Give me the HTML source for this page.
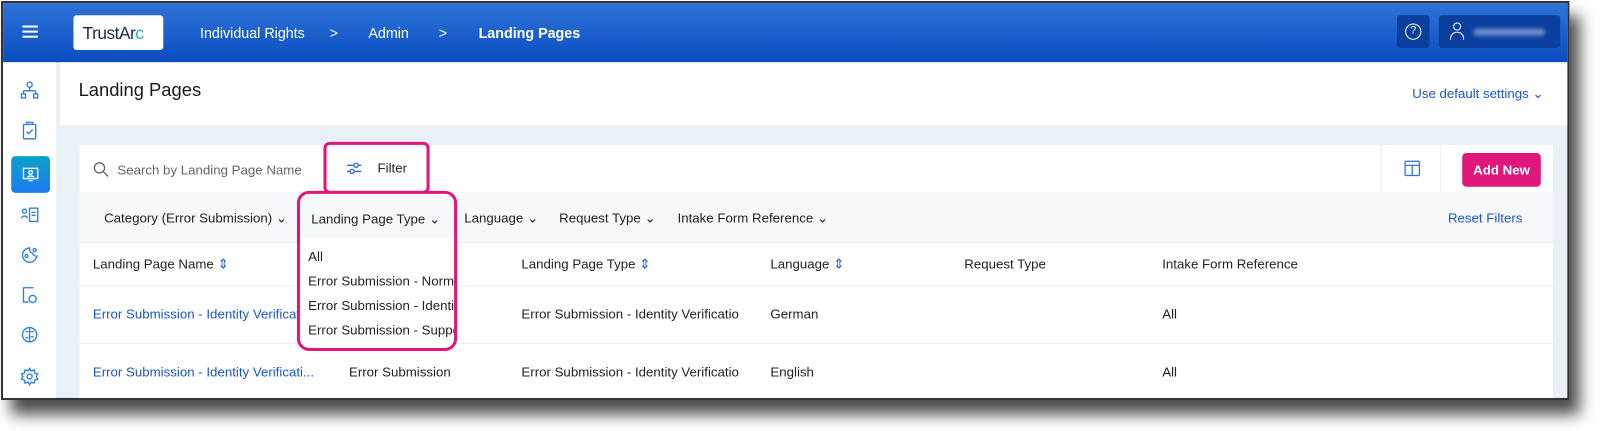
<!DOCTYPE html>
<html><head><meta charset="utf-8"><style>
*{box-sizing:border-box;margin:0;padding:0}
body{width:1600px;height:430px;background:#fff;font-family:"Liberation Sans",sans-serif;position:relative;overflow:hidden}
.wrap{position:absolute;left:0;top:0;width:1568px;height:422px;transform:scale(1.0204);transform-origin:0 0}
.frame{position:absolute;left:1px;top:1px;width:1537px;height:391px;border:2px solid #333;overflow:hidden;background:#e9f0f8;box-shadow:10px 14px 14px rgba(0,0,0,.7)}
.hdr{position:absolute;left:0;top:0;right:0;height:58px;background:linear-gradient(#2f73d8,#0a4ec2)}
.ab{position:absolute;color:#fff;font-size:14px;top:21px}
.side{position:absolute;left:0;top:58px;width:52px;bottom:0;background:#fff}
.title{position:absolute;left:56px;top:58px;right:0;height:62px;background:#fff}
.card{position:absolute;left:75px;top:139px;width:1444px;bottom:0;background:#fff}
.t{position:absolute;font-size:13px;color:#222;white-space:nowrap}
.lnk{color:#1a56c8}
.row{position:absolute;left:0;right:0;border-top:1px solid #eceef1}
.mag{position:absolute;border:3px solid #e0167a;background:#fff}
.ic{position:absolute;left:16px;width:20px;height:20px}
</style></head><body>
<div class="wrap">
<div class="frame">
<div class="hdr">
 <div style="position:absolute;left:19px;top:22px;width:15px;height:2px;background:#fff;box-shadow:0 5px #fff,0 10px #fff"></div>
 <div style="position:absolute;left:69px;top:12px;width:88px;height:34px;background:#fff;border-radius:3px;font-size:17px;color:#1b2a4a;padding:8px 0 0 9px;letter-spacing:-.5px">TrustAr<span style="color:#27b3c9">c</span></div>
 <div class="ab" style="left:193px">Individual Rights</div>
 <div class="ab" style="left:320px">&gt;</div>
 <div class="ab" style="left:358px">Admin</div>
 <div class="ab" style="left:427px">&gt;</div>
 <div class="ab" style="left:466px;font-weight:bold">Landing Pages</div>
 <div style="position:absolute;left:1366px;top:12px;width:32px;height:32px;background:#0a3f9e;border-radius:3px"><div style="margin:8px;width:16px;height:16px;border:1.5px solid #fff;border-radius:50%;color:#fff;font-size:11px;text-align:center;line-height:13px">?</div></div>
 <div style="position:absolute;left:1407px;top:12px;width:119px;height:32px;background:#0a3f9e;border-radius:3px"><div style="position:absolute;left:14px;top:7px;width:8px;height:8px;border:1.5px solid #fff;border-radius:50%"></div><div style="position:absolute;left:11px;top:16px;width:14px;height:8px;border:1.5px solid #fff;border-bottom:none;border-radius:7px 7px 0 0"></div><div style="position:absolute;left:34px;top:13px;width:70px;height:7px;background:#6f8fd0;border-radius:4px;filter:blur(2px)"></div></div>
</div>
<div class="side">
 <svg class="ic" style="top:18px" viewBox="0 0 20 20" fill="none" stroke="#2a7de1" stroke-width="1.3"><circle cx="10" cy="4" r="2.5"/><path d="M10 6.5V10M4 10h12M4 10v3M16 10v3"/><rect x="2" y="13" width="4" height="4"/><rect x="14" y="13" width="4" height="4"/></svg>
 <svg class="ic" style="top:57px" viewBox="0 0 20 20" fill="none" stroke="#2a7de1" stroke-width="1.3"><rect x="4" y="4" width="12" height="14" rx="1"/><path d="M7 4V2h6v2M7 11l2 2 4-4"/></svg>
 <div style="position:absolute;left:8px;top:92px;width:38px;height:36px;border-radius:4px;background:linear-gradient(#0ba1c9,#1d7cf2)"></div>
 <svg class="ic" style="top:100px;left:17px" viewBox="0 0 20 20" fill="none" stroke="#fff" stroke-width="1.3"><rect x="3" y="4" width="14" height="10"/><circle cx="10" cy="8" r="1.8"/><path d="M7 13c0-2 6-2 6 0M8 16h4"/></svg>
 <svg class="ic" style="top:140px" viewBox="0 0 20 20" fill="none" stroke="#2a7de1" stroke-width="1.3"><circle cx="5" cy="6" r="2"/><path d="M2 13c0-3 6-3 6 0"/><rect x="10" y="3" width="8" height="13"/><path d="M12 7h4M12 10h4"/></svg>
 <svg class="ic" style="top:179px" viewBox="0 0 20 20" fill="none" stroke="#2a7de1" stroke-width="1.3"><path d="M10 3a7 7 0 1 0 7 8c-2 0-4-1-4-3-2 0-3-2-3-5z"/><circle cx="15" cy="5" r="1.5"/><circle cx="7" cy="11" r="1.5"/></svg>
 <svg class="ic" style="top:218px" viewBox="0 0 20 20" fill="none" stroke="#2a7de1" stroke-width="1.3"><path d="M14 3H4v14h5"/><circle cx="13" cy="14" r="3.5"/></svg>
 <svg class="ic" style="top:257px" viewBox="0 0 20 20" fill="none" stroke="#2a7de1" stroke-width="1.3"><circle cx="10" cy="10" r="7"/><path d="M10 3v14M6 7h3M11 12h3M6 13h3M11 7h3"/></svg>
 <svg class="ic" style="top:298px" viewBox="0 0 20 20" fill="none" stroke="#2a7de1" stroke-width="1.3"><circle cx="10" cy="10" r="2.5"/><path d="M10 2l1.5 2.5 3-1 .5 3 3 1-1.5 2.5 1.5 2.5-3 1-.5 3-3-1L10 18l-1.5-2.5-3 1-.5-3-3-1L3.5 10 2 7.5l3-1 .5-3 3 1z"/></svg>
</div>
<div class="title">
 <div class="t" style="left:18px;top:17px;font-size:18px;color:#1a1a1a">Landing Pages</div>
 <div class="t lnk" style="left:1325px;top:23px">Use default settings &#8964;</div>
</div>
<div class="card">
 <svg style="position:absolute;left:13px;top:16px" width="16" height="16" viewBox="0 0 16 16" fill="none" stroke="#666" stroke-width="1.3"><circle cx="6.5" cy="6.5" r="5"/><path d="M10 10l5 5"/></svg>
 <div class="t" style="left:37px;top:17px;color:#666">Search by Landing Page Name</div>
 <div style="position:absolute;left:1275px;top:0;width:1px;height:46px;background:#eceef1"></div>
 <div style="position:absolute;left:1333px;top:0;width:1px;height:46px;background:#eceef1"></div>
 <svg style="position:absolute;left:1298px;top:15px" width="16" height="16" viewBox="0 0 16 16" fill="none" stroke="#2a6fd6" stroke-width="1.2"><rect x="1" y="1" width="14" height="14" rx="1"/><path d="M1 5h14M8 5v10"/></svg>
 <div style="position:absolute;left:1355px;top:8px;width:77px;height:33px;background:#e0167a;border-radius:4px;color:#fff;font-weight:bold;font-size:13px;text-align:center;line-height:33px">Add New</div>
 <div style="position:absolute;left:0;right:0;top:46px;height:49px;background:#f7f8f9"></div>
 <div class="t" style="left:24px;top:64px">Category (Error Submission) &#8964;</div>
 <div class="t" style="left:377px;top:64px">Language &#8964;</div>
 <div class="t" style="left:470px;top:64px">Request Type &#8964;</div>
 <div class="t" style="left:586px;top:64px">Intake Form Reference &#8964;</div>
 <div class="t lnk" style="left:1341px;top:64px">Reset Filters</div>
 <div class="row" style="top:95px"></div>
 <div class="t" style="left:13px;top:109px">Landing Page Name <span class="lnk">&#8661;</span></div>
 <div class="t" style="left:433px;top:109px">Landing Page Type <span class="lnk">&#8661;</span></div>
 <div class="t" style="left:677px;top:109px">Language <span class="lnk">&#8661;</span></div>
 <div class="t" style="left:867px;top:109px">Request Type</div>
 <div class="t" style="left:1061px;top:109px">Intake Form Reference</div>
 <div class="row" style="top:138px"></div>
 <div class="t lnk" style="left:13px;top:158px">Error Submission - Identity Verificati...</div>
 <div class="t" style="left:433px;top:158px">Error Submission - Identity Verificatio</div>
 <div class="t" style="left:677px;top:158px">German</div>
 <div class="t" style="left:1061px;top:158px">All</div>
 <div class="row" style="top:194px"></div>
 <div class="t lnk" style="left:13px;top:215px">Error Submission - Identity Verificati...</div>
 <div class="t" style="left:264px;top:215px">Error Submission</div>
 <div class="t" style="left:433px;top:215px">Error Submission - Identity Verificatio</div>
 <div class="t" style="left:677px;top:215px">English</div>
 <div class="t" style="left:1061px;top:215px">All</div>
</div>
<div class="mag" style="left:314px;top:136px;width:104px;height:51px;border-radius:6px">
 <svg style="position:absolute;left:19px;top:15px" width="16" height="16" viewBox="0 0 16 16" fill="none" stroke="#2a6fd6" stroke-width="1.3"><path d="M1 5h14M1 11h14"/><circle cx="10" cy="5" r="2" fill="#fff"/><circle cx="6" cy="11" r="2" fill="#fff"/></svg>
 <div class="t" style="left:50px;top:15px">Filter</div>
</div>
<div class="mag" style="left:288px;top:184px;width:157px;height:157px;border-radius:12px;overflow:hidden">
 <div style="position:absolute;left:0;right:0;top:0;height:43px;background:#f7f8f9"></div>
 <div class="t" style="left:11px;top:17px">Landing Page Type &#8964;</div>
 <div class="t" style="left:8px;top:54px">All</div>
 <div class="t" style="left:8px;top:78px">Error Submission - Normal</div>
 <div class="t" style="left:8px;top:102px">Error Submission - Identity</div>
 <div class="t" style="left:8px;top:126px">Error Submission - Support</div>
</div>
</div>
</div>
</body></html>
